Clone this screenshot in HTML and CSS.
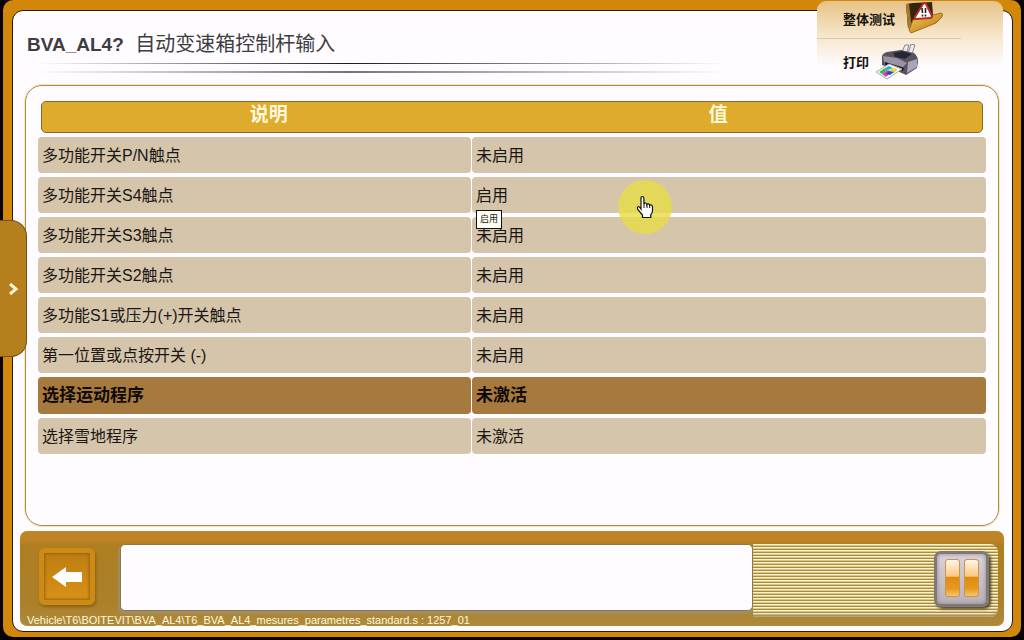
FILE: index.html
```html
<!DOCTYPE html>
<html lang="zh-CN">
<head>
    <meta charset="UTF-8">
    <meta name="viewport" content="width=device-width, initial-scale=1.0">
    <title>BVA_AL4</title>
    <link rel="stylesheet" href="styles.css">
</head>
<body>
    <div class="frame">
        <main class="window">
            <h1><span class="code">BVA_AL4?</span> 自动变速箱控制杆输入</h1>
            <div class="rules"></div>

            <section class="panel">
                <table class="params">
                    <thead>
                        <tr><th>说明</th><th>值</th></tr>
                    </thead>
                    <tbody>
                        <tr><td>多功能开关P/N触点</td><td>未启用</td></tr>
                        <tr>
                            <td>多功能开关S4触点</td>
                            <td class="hovered">启用
                                <span class="tooltip" role="tooltip">启用</span>
                                <span class="pointer">
                                    <svg width="18" height="24" viewBox="0 0 18 24">
                                        <path d="M5 14V3.2Q5 1.500 6.400 1.500T7.900 3.200V9Q8.300 7.800 9.600 8T10.900 9.500Q11.400 8.600 12.500 8.900T13.600 10.300Q14.300 9.600 15.300 10T16.500 11.600V15.500Q16.500 18 14.800 19.500V22.500H6.500V20L2 14.600Q.8 12.500 2 11.800 3.300 11.200 5 14Z" fill="#fff" stroke="#111" stroke-width="1.2"/>
                                        <path d="M8 9v4M11 9.500V13M13.700 10.500V13" stroke="#111" fill="none"/>
                                    </svg>
                                </span>
                            </td>
                        </tr>
                        <tr><td>多功能开关S3触点</td><td>未启用</td></tr>
                        <tr><td>多功能开关S2触点</td><td>未启用</td></tr>
                        <tr><td>多功能S1或压力(+)开关触点</td><td>未启用</td></tr>
                        <tr><td>第一位置或点按开关 (-)</td><td>未启用</td></tr>
                        <tr class="selected"><td>选择运动程序</td><td>未激活</td></tr>
                        <tr><td>选择雪地程序</td><td>未激活</td></tr>
                    </tbody>
                </table>
            </section>

            <footer class="bar">
                <button type="button" class="back" aria-label="返回">
                    <svg width="32" height="22" viewBox="0 0 32 22">
                        <path d="M1 11L15 1V6H31V16H15V21Z" fill="#fff"/>
                    </svg>
                </button>
                <div class="message"></div>
                <div class="stripes">
                    <button type="button" class="pause" aria-label="暂停">
                        <span></span><span></span>
                    </button>
                </div>
                <p class="status">Vehicle\T6\BOITEVIT\BVA_AL4\T6_BVA_AL4_mesures_parametres_standard.s : 1257_01</p>
            </footer>
        </main>
    </div>

    <nav class="tools">
        <button type="button">整体测试
            <svg class="folder" width="40" height="34" viewBox="0 0 40 34">
                <defs>
                    <linearGradient id="gold" x1="0" y1="0" x2="1" y2="1">
                        <stop offset="0" stop-color="#f3c95a"/>
                        <stop offset=".6" stop-color="#cf962c"/>
                        <stop offset="1" stop-color="#7b5212"/>
                    </linearGradient>
                </defs>
                <path d="M2 3L9 2 28 1 29 14 8 28 4 27Z" fill="#35260f"/>
                <path d="M2 3L5 3 8 29 4 27Z" fill="#a8782a"/>
                <path d="M9 19L37 12Q40 13 37 17L32 22 7 32 5 29Z" fill="url(#gold)" stroke="#a06c1c"/>
                <path d="M19 3Q20 1 22 3L28 15Q28 17 26 17L12 18Q10 18 11 16Z" fill="#fff" stroke="#bd2a27" stroke-width="2"/>
                <path d="M18 7L18.500 12M21.500 7V12M18.500 13.500V15.500M21.500 13.500V15.500" stroke="#222" stroke-width="1.6"/>
            </svg>
        </button>
        <button type="button">打印
            <svg class="printer" width="44" height="36" viewBox="0 0 44 36">
                <path d="M26 10L30 1 34 1 31 11ZM33 10L36 0 40 1 37 10Z" fill="#eeeaf0" stroke="#8a8590"/>
                <path d="M7 12Q8 9 12 8L26 6 39 9Q43 12 43 18L42 24 31 31 20 26 7 21Z" fill="#575361"/>
                <path d="M8 12L22 14 32 19 28 23 9 18Z" fill="#9993a5"/>
                <path d="M18 9L27 7 37 10 30 15 20 13Z" fill="#292633"/>
                <path d="M33 18L42 15 42 23 32 29Z" fill="#aaa4b6"/>
                <path d="M10 18L29 24 28 27 11 22Z" fill="#1d1a25"/>
                <path d="M1 28L14 20 27 25 12 35Z" fill="#fff" stroke="#aaa"/>
                <path d="M4 28L10 24 13 26 7 30Z" fill="#34bd57"/>
                <path d="M10 24L14 22 18 24 13 26Z" fill="#21aee6"/>
                <path d="M18 24L23 25 19 29 14 26Z" fill="#e6d837"/>
                <path d="M7 30L13 26 16 28 11 33Z" fill="#d23fae"/>
                <path d="M14 27L19 28 15 31 11 30Z" fill="#2747cf"/>
            </svg>
        </button>
    </nav>

    <button type="button" class="side-tab" aria-label="展开">
        <svg width="10" height="14" viewBox="0 0 10 14">
            <path d="M1 2L7 7 1 12" fill="none" stroke="#fff2cf" stroke-width="3"/>
        </svg>
    </button>
</body>
</html>
```

FILE: styles.css
```css
* {
    box-sizing: border-box;
}
body {
    margin: 0;
    padding: 0 3px 3px;
    min-height: 100vh;
    display: flex;
    position: relative;
    background-color: #080204;
    color: #1c1614;
    font-family: "Liberation Sans", "Noto Sans CJK SC", sans-serif;
    font-size: 16px;
}
button {
    padding: 0;
    border: none;
    background: none;
    font-family: inherit;
    color: inherit;
    cursor: pointer;
}
.frame {
    flex: 1;
    display: flex;
    padding: 10px 8px 5px 9px;
    border-radius: 10px;
    background-color: #d0870a;
}
.window {
    flex: 1;
    display: flex;
    flex-direction: column;
    padding: 0 8px 5px 7px;
    border: 1px solid #2a1a08;
    border-radius: 11px;
    background-color: #fffcff;
}
h1 {
    margin: 18px 0 3px 7px;
    font-size: 20px;
    line-height: 30px;
    font-weight: 400;
    color: #403d42;
}
h1 .code {
    margin-right: 6px;
    font-size: 19px;
    font-weight: 700;
}
.rules {
    width: 70%;
    height: 10px;
    margin-left: 18px;
    background:
        linear-gradient(90deg, transparent, #1c181c 45%, transparent) top / 100% 1px no-repeat,
        linear-gradient(90deg, transparent, #77727a 45%, transparent) bottom / 100% 2px no-repeat;
}

/* Parameter table */
.panel {
    flex: 1;
    margin: 12px 5px 5px;
    padding: 15px 12px;
    border: 1px solid #ac8a42;
    border-radius: 17px;
    box-shadow: 0 0 1px 1px #f3e5c4;
}
.params {
    display: block;
}
.params thead, .params tbody {
    display: block;
}
.params tr {
    display: grid;
    grid-template-columns: 433fr 514fr;
    column-gap: 1px;
}
.params thead tr {
    margin: 0 3px 4px;
    border: 1px solid #80692f;
    border-radius: 5px;
    background-color: #deab2c;
}
.params th {
    padding: 0 0 4px 24px;
    font-size: 19px;
    line-height: 26px;
    color: #fff8dd;
}
.params th:last-child {
    padding: 0 18px 4px 0;
}
.params tbody tr {
    margin-bottom: 4px;
}
.params td {
    height: 36px;
    padding: 1px 4px 0;
    border-radius: 4px;
    background-color: #d5c5ab;
    line-height: 36px;
}
.params .selected td {
    height: 37px;
    background-color: #a67a3e;
    color: #100906;
    font-size: 17px;
    font-weight: 700;
}
.hovered {
    position: relative;
}
.tooltip {
    position: absolute;
    top: 33px;
    left: 4px;
    z-index: 1;
    padding: 0 3px;
    border: 1px solid #111;
    background-color: #fffff4;
    font-size: 9px;
    line-height: 17px;
}
.pointer {
    position: absolute;
    top: 3px;
    left: 146px;
    z-index: 1;
    display: flex;
    align-items: center;
    justify-content: center;
    width: 54px;
    height: 54px;
    border-radius: 50%;
    background-color: rgba(230, 220, 70, 0.8);
}

/* Bottom bar */
.bar {
    position: relative;
    display: flex;
    align-items: flex-start;
    padding: 13px 6px 9px 19px;
    border-radius: 7px;
    background: linear-gradient(#bf8526, #bd8224 11px, #ae7f21 14px, #ab802a 75%, #ae8a3c);
}
.back {
    display: flex;
    align-items: center;
    justify-content: center;
    width: 56px;
    height: 57px;
    margin-top: 4px;
    border: 5px solid #cf8a16;
    border-radius: 6px;
    background: linear-gradient(#bd7e14, #cf8913 60%, #d8921a);
    box-shadow: inset 0 0 3px 1px #94640f, 1px 2px 3px #8a6112;
}
.message {
    flex: 1 1 633px;
    height: 67px;
    margin-left: 25px;
    border: 1px solid #8d7748;
    border-radius: 5px;
    background-color: #fffcff;
    box-shadow: -1px 2px 2px 1px #a28e66;
}
.stripes {
    flex: 1 1 245px;
    display: flex;
    justify-content: flex-end;
    align-items: flex-start;
    height: 73px;
    padding: 7px 9px 0 0;
    border-radius: 0 8px 8px 0;
    background: repeating-linear-gradient(#fbf3cc 0 1px, #d9c88a 1px 2px, #ac8c3a 2px 3px);
    box-shadow: inset 0 -4px 3px -2px #a99872;
}
.pause {
    display: flex;
    justify-content: center;
    gap: 4px;
    width: 55px;
    height: 56px;
    padding-top: 5px;
    border: 3px solid #7f7877;
    border-radius: 7px;
    background: linear-gradient(#dad3d9, #b9b1b7);
    box-shadow: inset 0 0 4px #8d868b, 2px 2px 3px #4d4026;
}
.pause span {
    width: 15px;
    height: 38px;
    border: 1px solid #c79454;
    border-radius: 3px;
    background: linear-gradient(#fff5e7, #fac880 45%, #e08a0c 48%, #e79a20 80%, #f6c66e);
}
.status {
    position: absolute;
    left: 7px;
    bottom: -1px;
    margin: 0;
    font-size: 11px;
    line-height: 13px;
    color: #fff8dc;
}

/* Shortcuts over the top edge */
.tools {
    position: absolute;
    top: 1px;
    right: 21px;
    width: 186px;
    height: 66px;
    border-radius: 9px 9px 0 0;
    background: linear-gradient(#e6c285, #f6e5c8 50%, #fffcff);
}
.tools button {
    display: flex;
    align-items: center;
    height: 34px;
    padding-left: 26px;
    font-size: 13px;
    font-weight: 700;
    color: #15100e;
}
.tools button + button {
    height: 46px;
    margin-top: 3px;
    width: 144px;
    border-top: 1px solid rgba(150, 130, 100, 0.3);
}
.folder {
    margin-left: 9px;
}
.printer {
    margin-left: 6px;
}

.side-tab {
    position: absolute;
    top: 220px;
    left: 0;
    display: flex;
    align-items: center;
    padding-left: 9px;
    width: 27px;
    height: 137px;
    border: 1px solid #72531b;
    border-left: none;
    border-radius: 0 16px 16px 0;
    background-color: #b57f1d;
}
```
